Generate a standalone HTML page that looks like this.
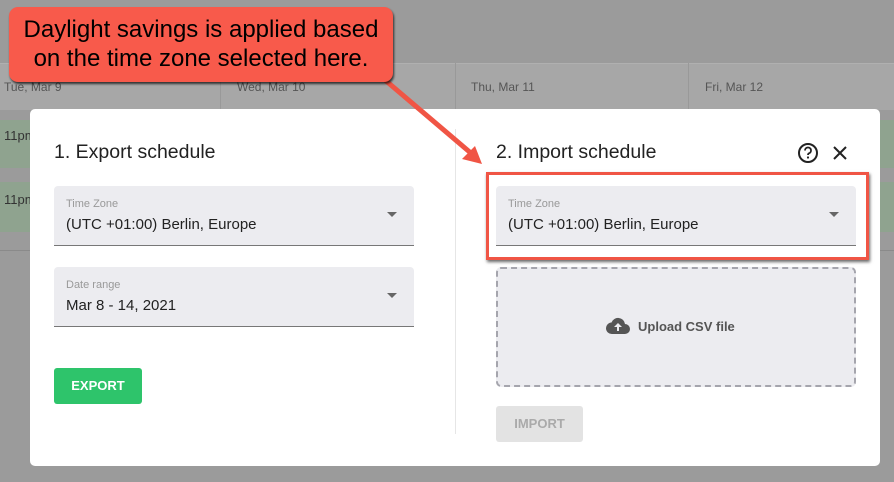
<!DOCTYPE html><html><head><style>
body{margin:0;width:894px;height:482px;position:relative;overflow:hidden;background:#9b9b9b;font-family:"Liberation Sans",sans-serif}
.a{position:absolute}
.hdr{top:63px;left:0;width:894px;height:46px;background:#a7a7a7;border-top:1px solid #b0b0b0}
.col{top:63px;width:1px;height:46px;background:#999}
.day{top:80px;font-size:12px;color:#555}
.ev{background:#8fa38f;left:0;width:30px;color:#333;font-size:13px}
.modal{left:30px;top:109px;width:850px;height:357px;background:#fff;border-radius:5px}
h2{position:absolute;margin:0;font-weight:normal;font-size:19.5px;color:#222}
.f{position:absolute;background:#ececf0;border-radius:4px 4px 0 0;border-bottom:1px solid #777;height:59px}
.f .l{position:absolute;left:12px;top:12px;font-size:11px;color:#999}
.f .v{position:absolute;left:12px;top:30px;font-size:15px;color:#222}
.f .c{position:absolute;right:17px;top:26px;width:0;height:0;border-left:5px solid transparent;border-right:5px solid transparent;border-top:5px solid #666}
.btn{position:absolute;border-radius:3px;font-size:13px;font-weight:bold;text-align:center;line-height:36px;height:36px}
</style></head><body>
<div class="a hdr"></div>
<div class="a col" style="left:220px"></div><div class="a col" style="left:455px"></div><div class="a col" style="left:688px"></div>
<div class="a day" style="left:4px">Tue, Mar 9</div>
<div class="a day" style="left:237px">Wed, Mar 10</div>
<div class="a day" style="left:471px">Thu, Mar 11</div>
<div class="a day" style="left:705px">Fri, Mar 12</div>
<div class="a ev" style="top:120px;height:48px"><span style="position:absolute;left:4px;top:8px">11pm</span></div>
<div class="a ev" style="top:182px;height:50px"><span style="position:absolute;left:4px;top:10px">11pm</span></div>
<div class="a" style="left:0;top:250px;width:894px;height:1px;background:#8a8a8a"></div>
<div class="a" style="left:880px;top:120px;width:14px;height:48px;background:#8fa38f"></div>
<div class="a" style="left:880px;top:182px;width:14px;height:50px;background:#8fa38f"></div>
<div class="a modal">
<h2 style="left:24px;top:32px">1. Export schedule</h2>
<div class="f" style="left:24px;top:77px;width:360px"><div class="l">Time Zone</div><div class="v">(UTC +01:00) Berlin, Europe</div><div class="c"></div></div>
<div class="f" style="left:24px;top:158px;width:360px"><div class="l">Date range</div><div class="v">Mar 8 - 14, 2021</div><div class="c"></div></div>
<div class="btn" style="left:24px;top:259px;width:88px;background:#2ec46b;color:#fff">EXPORT</div>
<div class="a" style="left:425px;top:20px;width:1px;height:305px;background:#e6e6e6"></div>
<h2 style="left:466px;top:32px">2. Import schedule</h2>
<svg class="a" style="left:767px;top:33px" width="22" height="22" viewBox="0 0 22 22"><circle cx="11" cy="11" r="9" fill="none" stroke="#222" stroke-width="2"/><path d="M8 8.5a3 3 0 1 1 4 2.8c-.8.4-1 .9-1 1.7" fill="none" stroke="#222" stroke-width="1.8"/><circle cx="11" cy="15.5" r="1.1" fill="#222"/></svg>
<svg class="a" style="left:802px;top:36px" width="16" height="16"><path d="M2 2L14 14M14 2L2 14" stroke="#222" stroke-width="2"/></svg>
<div class="f" style="left:466px;top:77px;width:360px"><div class="l">Time Zone</div><div class="v">(UTC +01:00) Berlin, Europe</div><div class="c"></div></div>
<div class="a" style="left:466px;top:158px;width:356px;height:116px;background:#ececf0;border:2px dashed #a5a5ad;border-radius:5px"></div>
<svg class="a" style="left:576px;top:208px" width="24" height="18" viewBox="0 0 24 18"><path d="M19 7A7 7 0 0 0 5.5 5.5 5.5 5.5 0 0 0 6 17h13a5 5 0 0 0 0-10z" fill="#555"/><path d="M12 6l-4 4h3v4h2v-4h3z" fill="#ececf0"/></svg>
<div class="a" style="left:608px;top:210px;font-size:13px;font-weight:bold;color:#555">Upload CSV file</div>
<div class="btn" style="left:466px;top:297px;width:87px;background:#e3e3e3;color:#aaa">IMPORT</div>
</div>
<div class="a" style="left:486px;top:172px;width:377px;height:82px;border:3px solid #f05545;box-shadow:1px 2px 3px rgba(0,0,0,.6)"></div>
<svg class="a" style="left:0;top:0" width="894" height="482"><line x1="385" y1="80" x2="472" y2="154" stroke="#f05545" stroke-width="5"/><polygon points="482,164 462,159 475,146" fill="#f05545"/></svg>
<div class="a" style="left:9px;top:7px;width:384px;height:75px;background:#f85a4b;border-radius:9px;box-shadow:1px 2px 2px rgba(0,0,0,.7);text-align:center;font-size:24px;line-height:29px;color:#000;padding-top:8px;box-sizing:border-box;white-space:nowrap">Daylight savings is applied based<br>on the time zone selected here.</div>
</body></html>
